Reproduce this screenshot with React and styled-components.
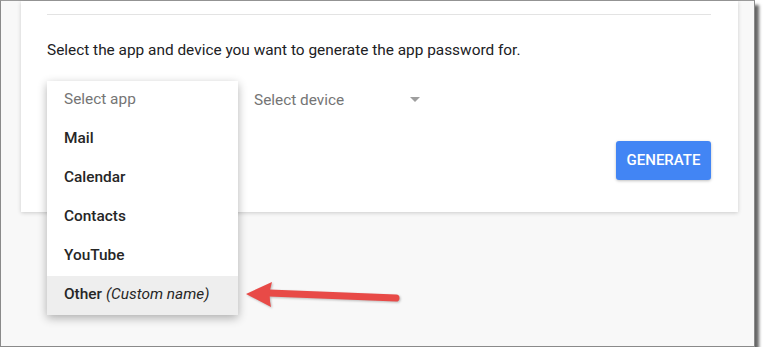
import React from "react";
import styled, { createGlobalStyle } from "styled-components";

const Global = createGlobalStyle`
  html, body { margin: 0; padding: 0; background: #ffffff; }
  body { font-family: Roboto, "Noto Sans", "Liberation Sans", sans-serif; }
`;

const Frame = styled.div`
  position: relative;
  box-sizing: border-box;
  width: 755px;
  height: 347px;
  border: 1px solid #8a8a8a;
  border-top-color: #9a9a9a;
  background: #f8f8f8;
  box-shadow: 4px 5px 3px rgba(0, 0, 0, 0.6);
  padding: 0 16px 0 20px;
  overflow: visible;
`;

const Card = styled.div`
  box-sizing: border-box;
  width: 717px;
  background: #ffffff;
  box-shadow: 0 1px 4px rgba(0, 0, 0, 0.18);
  padding: 13px 27px 32px 26px;
`;

const Divider = styled.div`
  height: 1px;
  background: #e3e3e3;
`;

const Prompt = styled.p`
  margin: 25px 0 0;
  font-size: 15.4px;
  line-height: 20px;
  color: #202124;
`;

const SelectRow = styled.div`
  position: relative;
  display: flex;
  height: 40px;
  margin-top: 21px;
`;

const Select = styled.div`
  display: flex;
  align-items: center;
  justify-content: space-between;
  box-sizing: border-box;
  width: ${(p) => p.$width}px;
  padding-left: 16px;
  padding-right: ${(p) => p.$padRight || 0}px;
  padding-bottom: 3px;
  font-size: 15.4px;
  color: #757575;
`;

const Caret = styled.span`
  width: 0;
  height: 0;
  border-left: 5.5px solid transparent;
  border-right: 5.5px solid transparent;
  border-top: 5.5px solid #9e9e9e;
`;

const Menu = styled.ul`
  position: absolute;
  top: 0;
  left: 0;
  width: 191px;
  margin: 0;
  padding: 0;
  list-style: none;
  background: #ffffff;
  box-shadow: 0 3px 9px rgba(0, 0, 0, 0.3);
  z-index: 2;
`;

const Item = styled.li`
  display: flex;
  align-items: center;
  box-sizing: border-box;
  height: 39px;
  padding: 0 0 3px 17px;
  font-size: 15.4px;
  font-weight: ${(p) => (p.$placeholder ? 400 : 500)};
  color: ${(p) => (p.$placeholder ? "#757575" : "#262626")};
  background: ${(p) => (p.$active ? "#eeeeee" : "transparent")};
  -webkit-font-smoothing: antialiased;
`;

const Em = styled.em`
  font-weight: 400;
  margin-left: 4px;
`;

const ButtonRow = styled.div`
  display: flex;
  justify-content: flex-end;
  margin-top: 20px;
`;

const Button = styled.button`
  width: 95px;
  height: 39px;
  border: none;
  border-radius: 3px;
  background: #4285f4;
  color: #ffffff;
  font-family: Roboto, "Noto Sans", sans-serif;
  font-size: 15px;
  font-weight: 500;
  padding: 0 0 2px;
  box-shadow: 0 1px 3px rgba(0, 0, 0, 0.25);
`;

const Arrow = styled.svg`
  position: absolute;
  left: 240px;
  top: 276px;
  overflow: visible;
  filter: drop-shadow(1px 1px 1px rgba(0, 0, 0, 0.25));
`;

export default function App() {
  return (
    <>
      <Global />
      <Frame>
        <Card>
          <Divider />
          <Prompt>Select the app and device you want to generate the app password for.</Prompt>
          <SelectRow>
            <Select $width={191}>Select app</Select>
            <Select $width={191} $padRight={9}>
              Select device
              <Caret />
            </Select>
            <Menu>
              <Item $placeholder>Select app</Item>
              <Item>Mail</Item>
              <Item>Calendar</Item>
              <Item>Contacts</Item>
              <Item>YouTube</Item>
              <Item $active>
                Other<Em>(Custom name)</Em>
              </Item>
            </Menu>
          </SelectRow>
          <ButtonRow>
            <Button>GENERATE</Button>
          </ButtonRow>
        </Card>
        <Arrow width="165" height="34" viewBox="0 0 165 34">
          <path d="M28 16 L155 21" stroke="#e84a47" strokeWidth="7" strokeLinecap="round" fill="none" />
          <path d="M5 17 L31 5 Q27 17 30 30 Z" fill="#e84a47" />
        </Arrow>
      </Frame>
    </>
  );
}
